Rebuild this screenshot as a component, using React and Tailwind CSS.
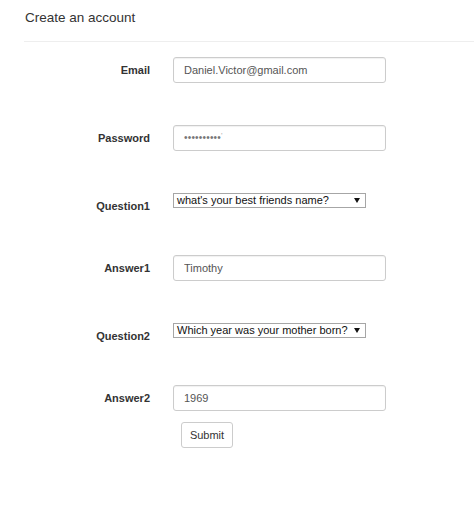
import React from 'react';

const font = { fontFamily: '"Liberation Sans", Arial, sans-serif' };

function Label({ children }) {
  return (
    <div className="w-[150px] h-[26px] flex items-center justify-end text-[11px] font-bold text-[#333]">
      {children}
    </div>
  );
}

function TextField({ value }) {
  return (
    <input
      type="text"
      defaultValue={value}
      className="ml-[23px] w-[213px] h-[26px] px-[10px] border border-[#ccc] rounded-[3px] text-[11px] text-[#555] bg-white shadow-[inset_0_1px_1px_rgba(0,0,0,0.06)] outline-none"
    />
  );
}

function FakeSelect({ value }) {
  return (
    <div className="ml-[23px] w-[193px] h-[15px] flex items-center justify-between pl-[3px] pr-[5px] border border-[#a6a6a6] bg-white text-[11px] text-[#111] leading-none">
      <span>{value}</span>
      <svg width="6" height="5" viewBox="0 0 6 5">
        <polygon points="0,0 6,0 3,5" fill="#111" />
      </svg>
    </div>
  );
}

export default function App() {
  return (
    <div className="min-h-[520px] bg-white" style={font}>
      <div className="ml-6 h-[42px] pt-[8px] border-b border-[#eee]">
        <h1 className="text-[13.5px] leading-5 text-[#333] pl-px">Create an account</h1>
      </div>

      <form className="mt-[15px]" onSubmit={(e) => e.preventDefault()}>
        <div className="flex items-center">
          <Label>Email</Label>
          <TextField value="Daniel.Victor@gmail.com" />
        </div>

        <div className="flex items-center mt-[42px]">
          <Label>Password</Label>
          <div className="ml-[23px] w-[213px] h-[26px] px-[10px] flex items-center border border-[#ccc] rounded-[3px] bg-white shadow-[inset_0_1px_1px_rgba(0,0,0,0.06)]">
            <span className="text-[10px] text-[#777] tracking-[0.2px] leading-none">••••••••••</span>
            <span className="text-[8px] text-[#aaa] leading-none -mt-1">'</span>
          </div>
        </div>

        <div className="flex items-start mt-[42px]">
          <Label>Question1</Label>
          <FakeSelect value="what's your best friends name?" />
        </div>

        <div className="flex items-center mt-[36px]">
          <Label>Answer1</Label>
          <TextField value="Timothy" />
        </div>

        <div className="flex items-start mt-[42px]">
          <Label>Question2</Label>
          <FakeSelect value="Which year was your mother born?" />
        </div>

        <div className="flex items-center mt-[36px]">
          <Label>Answer2</Label>
          <TextField value="1969" />
        </div>

        <div className="mt-[11px] pl-[181px]">
          <button
            type="submit"
            className="w-[52px] h-[26px] border border-[#ccc] rounded-[3px] bg-white text-[11px] text-[#333]"
          >
            Submit
          </button>
        </div>
      </form>
    </div>
  );
}
